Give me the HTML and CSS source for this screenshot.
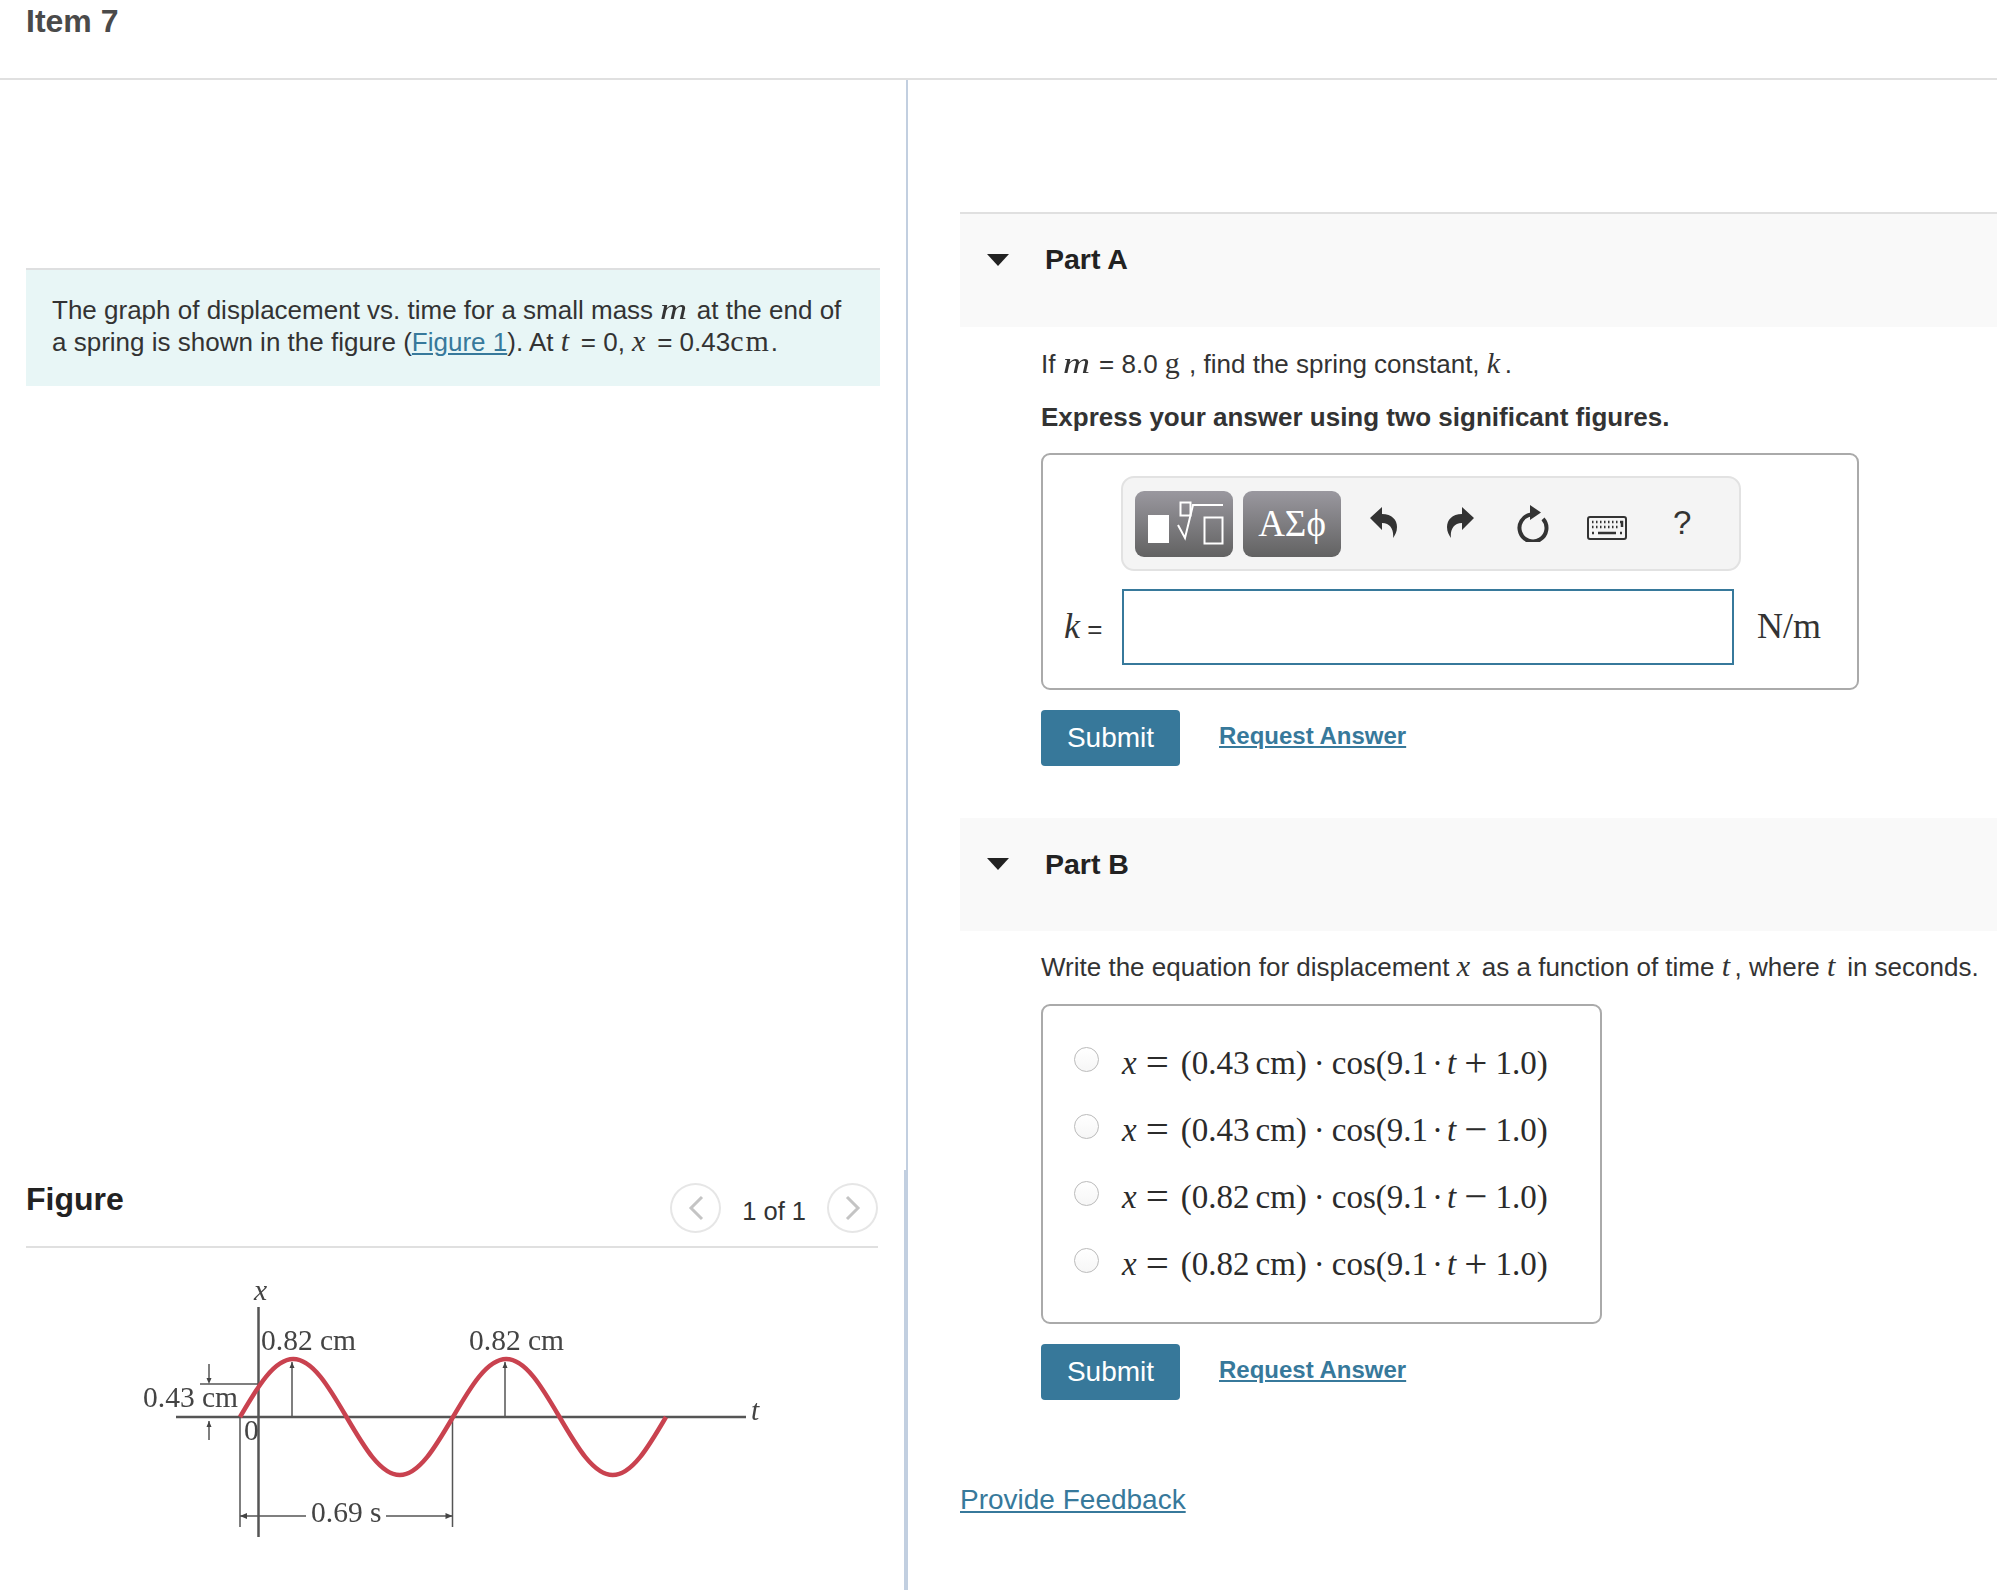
FILE: index.html
```html
<!DOCTYPE html>
<html lang="en">
<head>
<meta charset="utf-8">
<title>Item 7</title>
<link rel="stylesheet" href="styles.css">
</head>
<body>
<svg class="defs" width="0" height="0" aria-hidden="true">
  <symbol id="arrow" viewBox="0 0 27 31"><path d="M0 11 12 0V7C22 7 27 13 27 20 27 25 25 28 23 31 24 24 21 16 12 16V23Z"/></symbol>
</svg>
<header class="top"><h1 class="item-title">Item 7</h1></header>
<main class="split">
  <section class="left">
    <div class="intro">The graph of displacement vs. time for a small mass <i class="mi mw">m</i> at the end of a spring is shown in the figure (<a href="#" class="link">Figure 1</a>). At <i class="mi">t</i> = 0, <i class="mi">x</i> = 0.43<span class="mr">cm</span>.</div>
    <div class="fig-head">
      <h2 class="fig-title">Figure</h2>
      <div class="pager">
        <span class="circle"><svg width="16" height="26" viewBox="0 0 16 26"><path d="M14 2 3 13l11 11" class="chev"/></svg></span>
        <span class="count">1 of 1</span>
        <span class="circle"><svg width="16" height="26" viewBox="0 0 16 26"><path d="M2 2l11 11L2 24" class="chev"/></svg></span>
      </div>
    </div>
    <svg class="graph" width="660" height="320" viewBox="120 1270 660 320">
      <g class="thin">
        <path d="M240 1417V1527M452.500 1417V1527M292 1417V1362M505 1417V1362M200 1384H258M240 1516H306M386 1516H452"/>
        <path d="M209 1364V1380M209 1421V1440"/>
      </g>
      <g class="heads">
        <path d="M292 1362l-2.500 6h5zM505 1362l-2.500 6h5zM240 1516l7-3v6zM452.500 1516l-7-3v6zM209 1384l-2.500-6h5zM209 1421l-2.500 6h5z"/>
      </g>
      <path class="axis" d="M258.500 1307V1537M176 1417H746"/>
      <path class="wave" d="M240 1417c17.400-29.700 34-58 53.250-58 19.250 0 35.850 28.300 53.250 58 17.400 29.700 34 58 53.250 58 19.250 0 35.850-28.300 53.250-58 17.400-29.700 34-58 53.250-58 19.250 0 35.850 28.300 53.250 58 17.400 29.700 34 58 53.250 58 19.250 0 35.850-28.300 53.250-58"/>
      <g class="gt">
        <text x="261" y="1350">0.82 cm</text>
        <text x="469" y="1350">0.82 cm</text>
        <text x="143" y="1407">0.43 cm</text>
        <text x="244" y="1440">0</text>
        <text x="311" y="1522">0.69 s</text>
        <text x="254" y="1300" class="gi">x</text>
        <text x="751" y="1420" class="gi">t</text>
      </g>
    </svg>
  </section>
  <section class="right">
    <div class="part-head part-a"><span class="tri"></span><h3 class="part-title">Part A</h3></div>
    <div class="part-body">
      <p class="q q-a">If <i class="mi mw">m</i> = 8.0 <span class="mr">g</span> , find the spring constant, <i class="mi">k</i>.</p>
      <p class="q q-bold">Express your answer using two significant figures.</p>
      <div class="answer">
        <div class="toolbar">
          <button class="tool-btn" aria-label="Templates">
            <svg width="98" height="66" viewBox="0 0 98 66">
              <rect x="13" y="24" width="21" height="28" class="ws-fill"/>
              <rect x="45.500" y="11.500" width="10" height="13" class="ws"/>
              <path d="M43 34l7 13 8-33h30" class="ws"/>
              <rect x="69.500" y="26.500" width="18" height="26" class="ws"/>
            </svg>
          </button>
          <button class="tool-btn tool-sym">ΑΣϕ</button>
          <svg class="ico ico-undo" width="27" height="31"><use href="#arrow"/></svg>
          <svg class="ico ico-redo" width="27" height="31"><use href="#arrow"/></svg>
          <svg class="ico ico-reload" width="32" height="37" viewBox="0 0 32 37">
            <path d="M14 9.600A13.500 13.500 0 1 0 26 13.900" class="ring"/>
            <path d="M13 0l11 7.500-11 7.500z" class="ring-head"/>
          </svg>
          <svg class="ico ico-kb" width="40" height="24" viewBox="0 0 40 24">
            <rect x="1" y="1" width="38" height="22" rx="2" class="kb"/>
            <path d="M5 6h1.500M9 6h1.500M13 6h1.500M17 6h1.500M21 6h1.500M25 6h1.500M29 6h1.500M33 6h2V11M5 11h1.500M9 11h1.500M13 11h1.500M17 11h1.500M21 11h1.500M25 11h1.500M29 11h1.500M5 17h2M11 17h18M33 17h2" class="keys"/>
          </svg>
          <span class="help">?</span>
        </div>
        <div class="input-row">
          <span class="var"><i class="mk">k</i> =</span>
          <div class="input"></div>
          <span class="unit">N/m</span>
        </div>
      </div>
      <div class="actions">
        <button class="submit">Submit</button>
        <a href="#" class="link req">Request Answer</a>
      </div>
    </div>
    <div class="part-head part-b"><span class="tri"></span><h3 class="part-title">Part B</h3></div>
    <div class="part-body">
      <p class="q q-b">Write the equation for displacement <i class="mi">x</i> as a function of time <i class="mi">t</i>, where <i class="mi">t</i> in seconds.</p>
      <div class="choices">
        <label class="choice"><span class="radio"></span><span class="eq"><i>x</i><span class="op op-eq">=</span>(0.43<span class="thin-gap">cm</span>)<span class="dot">·</span>cos(9.1<span class="dot dot-s">·</span><i>t</i><span class="op">+</span>1.0)</span></label>
        <label class="choice"><span class="radio"></span><span class="eq"><i>x</i><span class="op op-eq">=</span>(0.43<span class="thin-gap">cm</span>)<span class="dot">·</span>cos(9.1<span class="dot dot-s">·</span><i>t</i><span class="op">−</span>1.0)</span></label>
        <label class="choice"><span class="radio"></span><span class="eq"><i>x</i><span class="op op-eq">=</span>(0.82<span class="thin-gap">cm</span>)<span class="dot">·</span>cos(9.1<span class="dot dot-s">·</span><i>t</i><span class="op">−</span>1.0)</span></label>
        <label class="choice"><span class="radio"></span><span class="eq"><i>x</i><span class="op op-eq">=</span>(0.82<span class="thin-gap">cm</span>)<span class="dot">·</span>cos(9.1<span class="dot dot-s">·</span><i>t</i><span class="op">+</span>1.0)</span></label>
      </div>
      <div class="actions">
        <button class="submit">Submit</button>
        <a href="#" class="link req">Request Answer</a>
      </div>
    </div>
    <a href="#" class="link feedback">Provide Feedback</a>
  </section>
</main>
</body>
</html>
```
FILE: styles.css
```css
* { box-sizing: border-box; }
html, body { margin: 0; padding: 0; }
body { width: 1997px; height: 1590px; overflow: hidden; background: #fff; color: #333; font: 26px/32px "Liberation Sans", Arial, sans-serif; }
.defs { position: absolute; }
h1, h2, h3, p { margin: 0; }
.top { height: 80px; border-bottom: 2px solid #e0e0e0; padding-left: 26px; }
.item-title { font-size: 32px; line-height: 42px; font-weight: 700; color: #4a4a4a; }
.split { display: flex; height: 1510px; }
.left { position: relative; width: 908px; flex: none; border-right: 2px solid #c2cfe0; padding-left: 26px; }
.left::after { content: ""; position: absolute; right: -2px; top: 1090px; bottom: 0; width: 4px; background: #c2cfe0; }
.intro { width: 854px; height: 118px; margin-top: 188px; padding: 24px 26px 0; background: #e8f6f6; border-top: 2px solid #dedfe0; }
.link { color: #37799b; text-decoration: underline; }
.mi { font-family: "Liberation Serif", serif; font-style: italic; font-size: 30px; line-height: 1; letter-spacing: 4.500px; }
.mw { display: inline-block; margin: 0 3px; letter-spacing: 1.500px; transform: scaleX(1.25); }
.mr { font-family: "Liberation Serif", serif; font-size: 30px; line-height: 1; letter-spacing: 2px; }
.fig-head { display: flex; justify-content: space-between; width: 852px; height: 65px; margin-top: 797px; border-bottom: 2px solid #e0e0e0; }
.fig-title { font-size: 32px; line-height: 32px; font-weight: 700; color: #222; }
.pager { display: flex; gap: 21px; align-items: flex-start; }
.circle { display: flex; align-items: center; justify-content: center; width: 51px; height: 50px; border: 2px solid #e6e6e6; border-radius: 50%; }
.chev { fill: none; stroke: #c4c4c4; stroke-width: 3; }
.count { font-size: 25.500px; line-height: 56px; }
.graph { display: block; margin: 22px 0 0 94px; filter: blur(0.6px); }
.thin { fill: none; stroke: #555; stroke-width: 1.500; }
.heads { fill: #444; }
.axis { fill: none; stroke: #555; stroke-width: 2.500; }
.wave { fill: none; stroke: #c9424f; stroke-width: 4.500; }
.gt { font: 29.500px "Liberation Serif", serif; fill: #444; }
.gi { font-style: italic; }
.right { flex: 1; min-width: 0; padding-left: 52px; }
.part-head { display: flex; gap: 36px; padding: 28px 0 0 27px; background: #f9f9f9; align-items: flex-start; }
.part-a { height: 115px; margin-top: 132px; border-top: 2px solid #e0e0e0; }
.part-b { height: 113px; margin-top: 52px; padding-top: 29px; }
.tri { width: 0; height: 0; margin-top: 12px; border-left: 11.500px solid transparent; border-right: 11.500px solid transparent; border-top: 12px solid #222; }
.part-b .tri { margin-top: 11px; }
.part-title { font-size: 28.500px; line-height: 34px; font-weight: 700; color: #222; }
.part-body { margin-left: 81px; }
.q-a { margin-top: 21px; }
.q-bold { margin-top: 21px; font-weight: 700; }
.q-b { margin-top: 20px; white-space: nowrap; }
.answer { width: 818px; height: 237px; margin-top: 20px; padding: 21px 21px 0; border: 2px solid #aaa; border-radius: 9px; }
.toolbar { display: flex; align-items: center; width: 620px; height: 95px; margin-left: 57px; padding-left: 12px; background: #f4f4f4; border: 2px solid #e2e2e2; border-radius: 13px; }
.tool-btn { width: 98px; height: 66px; padding: 0; border: 0; border-radius: 9px; background: linear-gradient(#9a989f, #626262); margin-right: 10px; display: block; }
.tool-sym { color: #fff; font: 37px/56px "Liberation Serif", serif; }
.tool-btn svg { display: block; }
.ws { fill: none; stroke: #fff; stroke-width: 2; }
.ws-fill { fill: #fff; }
.ico { flex: none; fill: #333; }
.ico-undo { margin: -2px 0 0 19px; }
.ico-redo { margin: -2px 0 0 50px; transform: scaleX(-1); }
.ico-reload { margin: 0 0 0 43px; }
.ring { fill: none; stroke: #333; stroke-width: 4; }
.ring-head { fill: #333; }
.ico-kb { margin: 8px 0 0 38px; }
.kb { fill: #f4f4f4; stroke: #333; stroke-width: 2; }
.keys { fill: none; stroke: #333; stroke-width: 2.500; }
.help { margin: -2px 0 0 46px; font-size: 33px; color: #333; }
.input-row { display: flex; align-items: center; margin-top: 18px; }
.var { width: 58px; flex: none; margin-top: -3px; font-size: 26px; white-space: nowrap; }
.mk { font: italic 36px "Liberation Serif", serif; }
.input { width: 612px; height: 76px; flex: none; border: 2px solid #37799b; background: #fff; }
.unit { margin: -2px 0 0 23px; font: 36px "Liberation Serif", serif; }
.actions { display: flex; align-items: center; gap: 39px; margin-top: 20px; }
.submit { width: 139px; height: 56px; padding: 0; border: 0; border-radius: 4px; background: #37789a; color: #fff; font: 28px "Liberation Sans", Arial, sans-serif; }
.req { margin-top: -4px; font-size: 24px; font-weight: 700; }
.choices { width: 561px; height: 320px; margin-top: 21px; padding-top: 24px; border: 2px solid #aaa; border-radius: 9px; }
.choice { display: flex; height: 67px; align-items: center; padding-left: 31px; }
.radio { flex: none; width: 25px; height: 25px; margin-top: -8px; border: 1.500px solid #bbb; border-radius: 50%; background: linear-gradient(#fff, #f6f6f6); }
.eq { margin-left: 23px; font: 33px "Liberation Serif", serif; white-space: nowrap; color: #2b2b2b; }
.op { display: inline-block; margin: 0 8px; font-size: 41px; line-height: 0; vertical-align: -2px; }
.op-eq { margin: 0 12px 0 9px; }
.thin-gap { margin-left: 6px; }
.dot { margin: 0 7px; }
.dot-s { margin: 0 4px; }
.feedback { display: block; width: max-content; margin-top: 83px; font-size: 28px; line-height: 34px; }
```
